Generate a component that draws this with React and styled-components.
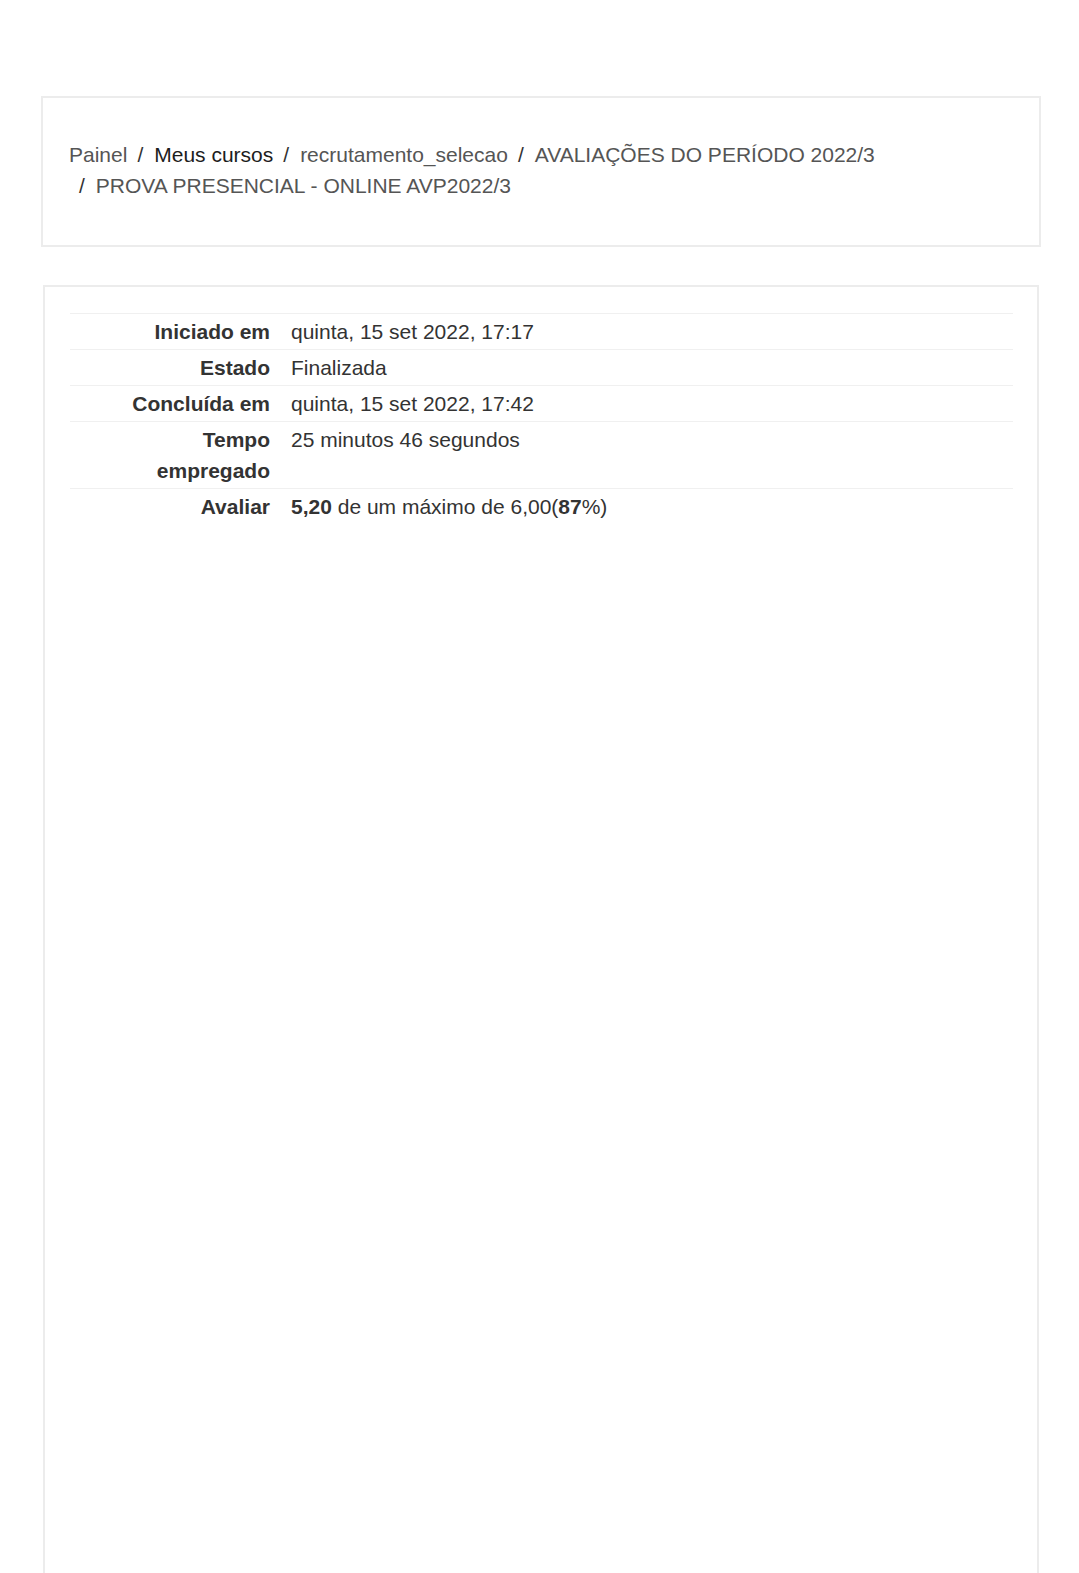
import React from 'react'
import styled, { createGlobalStyle } from 'styled-components'

const GlobalStyle = createGlobalStyle`
  html, body {
    margin: 0;
    padding: 0;
    background: #fff;
  }
  body {
    font-family: "Liberation Sans", Arial, sans-serif;
    font-size: 21px;
    line-height: 1.5;
    color: #333;
  }
`;

const Page = styled.div`
  min-height: 1573px;
  padding: 96px 38px 0 41px;
  box-sizing: border-box;
  display: flex;
  flex-direction: column;
`;

const HeaderCard = styled.div`
  border: 2px solid #ececec;
  padding: 41px 26px 44px 26px;
`;

const Breadcrumb = styled.ol`
  list-style: none;
  margin: 0;
  padding: 0;
  display: flex;
  flex-wrap: wrap;
  line-height: 31px;
`;

const Crumb = styled.li`
  color: ${p => (p.$dark ? '#1d1d1d' : '#555')};

  &:not(:first-child)::before {
    content: "/";
    color: #333;
    padding: 0 11px 0 10px;
  }
`;

const MainCard = styled.div`
  margin: 38px 2px 0 2px;
  border: 2px solid #ececec;
  border-bottom: none;
  flex: 1;
  padding: 26px 24px 0 25px;
`;

const Summary = styled.table`
  width: 100%;
  border-collapse: collapse;
  border-top: 1px solid #f0f0f0;
`;

const Row = styled.tr`
  &:not(:first-child) td, &:not(:first-child) th {
    border-top: 1px solid #f0f0f0;
  }
`;

const Label = styled.th`
  width: 170px;
  text-align: right;
  font-weight: bold;
  color: #333;
  padding: 2px 10px 2px 30px;
  line-height: 31px;
  vertical-align: top;
`;

const Value = styled.td`
  text-align: left;
  padding: 2px 11px;
  line-height: 31px;
  vertical-align: top;
  color: #333;
`;

const rows = [
  ['Iniciado em', 'quinta, 15 set 2022, 17:17'],
  ['Estado', 'Finalizada'],
  ['Concluída em', 'quinta, 15 set 2022, 17:42'],
  ['Tempo empregado', '25 minutos 46 segundos'],
]

const App = () => (
  <>
    <GlobalStyle />
    <Page>
      <HeaderCard>
        <Breadcrumb>
          <Crumb>Painel</Crumb>
          <Crumb $dark>Meus cursos</Crumb>
          <Crumb>recrutamento_selecao</Crumb>
          <Crumb>AVALIAÇÕES DO PERÍODO 2022/3</Crumb>
          <Crumb>PROVA PRESENCIAL - ONLINE AVP2022/3</Crumb>
        </Breadcrumb>
      </HeaderCard>
      <MainCard>
        <Summary>
          <tbody>
            {rows.map(([label, value]) => (
              <Row key={label}>
                <Label>{label}</Label>
                <Value>{value}</Value>
              </Row>
            ))}
            <Row>
              <Label>Avaliar</Label>
              <Value><b>5,20</b> de um máximo de 6,00(<b>87</b>%)</Value>
            </Row>
          </tbody>
        </Summary>
      </MainCard>
    </Page>
  </>
)

export default App
